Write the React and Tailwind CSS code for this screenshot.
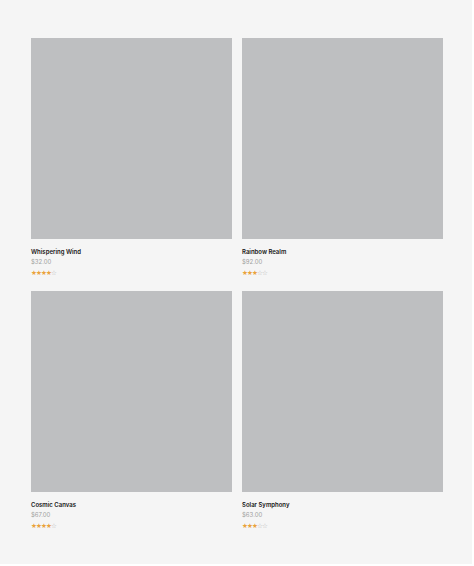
import React from "react";

const items = [
  { name: "Whispering Wind", price: "$32.00", rating: 4 },
  { name: "Rainbow Realm", price: "$92.00", rating: 3 },
  { name: "Cosmic Canvas", price: "$67.00", rating: 4 },
  { name: "Solar Symphony", price: "$63.00", rating: 3 },
];

function Stars({ rating }) {
  return (
    <div className="mt-[1px] flex h-[10px] items-center">
      {[0, 1, 2, 3, 4].map((i) => (
        <span
          key={i}
          className={
            "inline-block w-[5px] text-center text-[6.5px] leading-[10px] " +
            (i < rating ? "text-[#eaa23c]" : "text-[#bdbdbd]")
          }
          style={{ fontFamily: "'DejaVu Sans', sans-serif" }}
        >
          {i < rating ? "★" : "☆"}
        </span>
      ))}
    </div>
  );
}

export default function App() {
  return (
    <div className="w-[474px] h-[566px] bg-white" style={{ fontFamily: "Inter, 'Noto Sans', sans-serif" }}>
      <div className="w-[472px] h-[564px] bg-[#f5f5f5] pt-[38px] pl-[31px]">
        <div className="grid grid-cols-[201px_201px] gap-x-[10px] gap-y-[13px]">
          {items.map((it) => (
            <div key={it.name} className="flex flex-col">
              <div className="w-[201px] h-[201px] bg-[#bebfc1]" />
              <div className="mt-[8px] text-[6px] leading-[10px] font-semibold text-[#151515]">{it.name}</div>
              <div className="text-[6px] leading-[10px] text-[#a0a0a0]">{it.price}</div>
              <Stars rating={it.rating} />
            </div>
          ))}
        </div>
      </div>
    </div>
  );
}
